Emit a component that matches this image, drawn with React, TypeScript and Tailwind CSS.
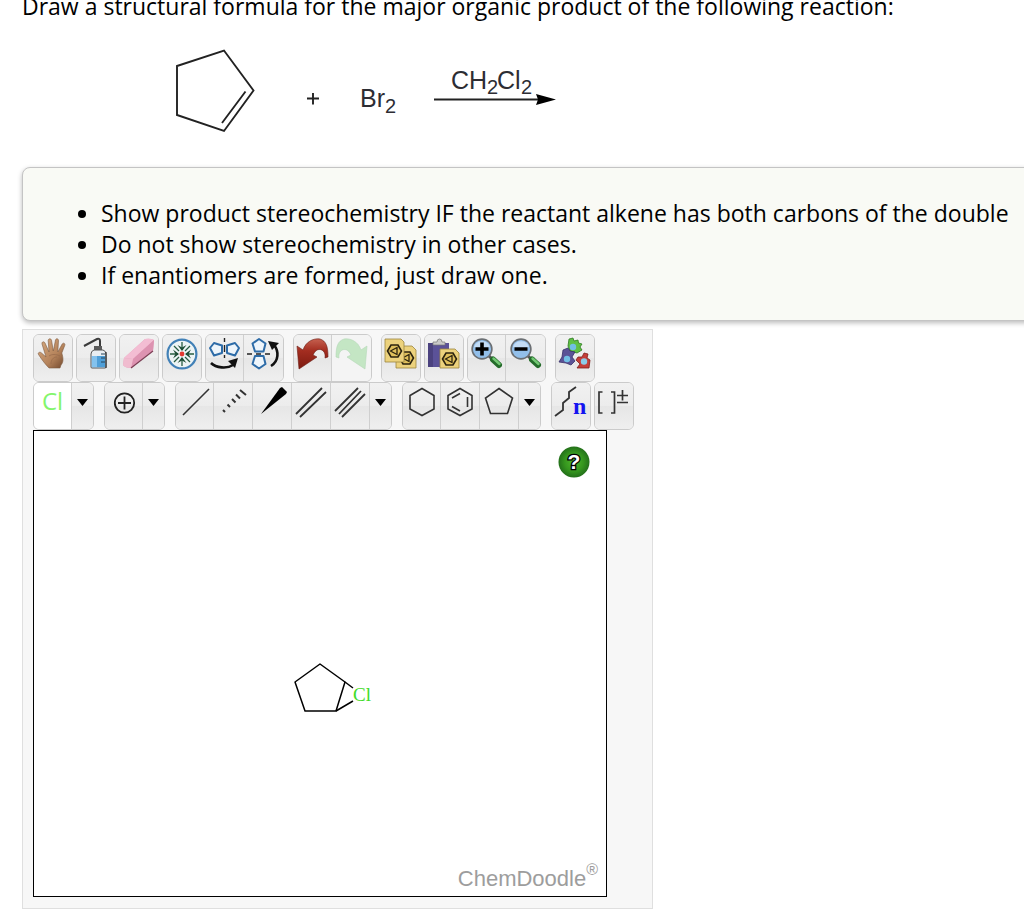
import type { ReactNode } from "react";

const HINTS = [
  "Show product stereochemistry IF the reactant alkene has both carbons of the double",
  "Do not show stereochemistry in other cases.",
  "If enantiomers are formed, just draw one.",
];

const BUTTON_BG =
  "bg-[linear-gradient(#f1f1f1,#ececec_50%,#e6e6e6_50%,#efefef)] hover:brightness-105";

function Icon({ children }: { children: ReactNode }) {
  return (
    <svg viewBox="0 0 32 32" className="h-8 w-8 shrink-0 overflow-visible" aria-hidden="true">
      {children}
    </svg>
  );
}

function Group({ children }: { children: ReactNode }) {
  return (
    <div className="flex h-12 divide-x divide-[#cfcfcf] overflow-hidden rounded-md border border-[#cbcbcb]">
      {children}
    </div>
  );
}

function Tool({
  label,
  children,
  active,
  disabled,
}: {
  label: string;
  children: ReactNode;
  active?: boolean;
  disabled?: boolean;
}) {
  return (
    <button
      type="button"
      title={label}
      aria-label={label}
      aria-pressed={active}
      disabled={disabled}
      className={`flex w-[39px] justify-center pt-[3px] first:w-[38px] ${
        active ? "bg-white" : disabled ? "bg-[#f4f4f4]" : BUTTON_BG
      }`}
    >
      {children}
    </button>
  );
}

function More({ label }: { label: string }) {
  return (
    <button
      type="button"
      aria-label={label}
      className={`flex w-[21px] items-start justify-center pt-4 ${BUTTON_BG}`}
    >
      <svg viewBox="0 0 11 7" className="h-[7px] w-[11px]" aria-hidden="true">
        <path d="M0 0H11L5.5 7Z" fill="#000" />
      </svg>
    </button>
  );
}

function HandIcon() {
  return (
    <Icon>
      <defs>
        <linearGradient id="skin" x1="0" y1="0" x2="1" y2="1">
          <stop offset="0" stopColor="#d6aa81" />
          <stop offset=".6" stopColor="#b5835b" />
          <stop offset="1" stopColor="#6e452b" />
        </linearGradient>
      </defs>
      <path
        d="M12 30C9 27 5 22 1.5 16.5C.5 14.5 3 13.5 4.5 15L9 19L5 6C4.6 3.6 7 3 8 5L12 14L11.2 2.5C11.2.5 14 .2 14.5 2.2L16.3 13L18.5 2C19 0 21.7.5 21.5 2.7L20.8 14L25.2 6C26.5 4.3 28.5 5.4 27.7 7.6L24.8 15C26 19 27 24 24 27L23 30Z"
        fill="url(#skin)"
        stroke="#7d5a40"
        strokeWidth=".6"
      />
      <path d="M12 18C15 16 19 16 23 18M14 26C14 22 16 19 20 19" fill="none" stroke="#95694a" strokeWidth=".7" />
    </Icon>
  );
}

function BottleIcon() {
  return (
    <Icon>
      <path d="M4 8L17 1Q20 0 20 3V10" fill="none" stroke="#3b3b3b" strokeWidth="2" />
      <path d="M14 8H22V13H14Z" fill="#5c5c5c" />
      <path d="M14 12H23Q26 13 26 16V29Q26 30 25 30H12Q11 30 11 29V16Q11 13 14 12Z" fill="#e9eef2" stroke="#555" strokeWidth="1" />
      <path d="M11.8 18H25.2V29.2H11.8Z" fill="#4f9fd8" />
      <path d="M12 18H17V29H12Z" fill="#83c2ee" />
      <path d="M21 16H25M21 20H25M21 24H25" stroke="#26445a" strokeWidth="1" />
      <path d="M26 14V30" stroke="#333" strokeWidth="1.2" />
    </Icon>
  );
}

function EraserIcon() {
  return (
    <Icon>
      <path d="M1 20L22 1Q27 0 31 2L30 13L8 30Q2 30 0 27Z" fill="#e3a1bb" />
      <path d="M1 20L22 1Q27 0 31 2L10 21Z" fill="#f3bdd3" />
      <path d="M10 21L31 2L30 13L8 30Z" fill="#dd93b1" />
      <path d="M1 20L10 21L8 30Q2 30 0 27Z" fill="#f0bccf" />
      <path d="M8 30L30 13" stroke="#7c4056" strokeWidth="1.2" />
    </Icon>
  );
}

function CenterIcon() {
  return (
    <Icon>
      <circle cx="16" cy="16" r="14.4" fill="#edf4f5" stroke="#4281b7" strokeWidth="2.2" />
      <path d="M16 4V12M16 28V20M4 16H12M28 16H20M8 8L13 13M24 24L19 19M24 8L19 13M8 24L13 19" stroke="#275d42" strokeWidth="1.3" />
      <path
        d="M11.5 7L16 13L20.5 7L16 9.5ZM11.5 25L16 19L20.5 25L16 22.5ZM7 11.5L13 16L7 20.5L9.5 16ZM25 11.5L19 16L25 20.5L22.5 16Z"
        fill="#1c4d34"
      />
      <circle cx="16" cy="16" r="2.4" fill="#e33a32" />
    </Icon>
  );
}

function FlipHorizontalIcon() {
  return (
    <Icon>
      <g fill="#eef5fb" stroke="#2e6ca8" strokeWidth="2" strokeLinejoin="round">
        <path d="M1 10L5 5L13 7.5V15L5 17.5Z" />
        <path d="M30 10L26 5L18 7.5V15L26 17.5Z" />
      </g>
      <path d="M15.5 0V4M15.5 7V14M15.5 17V20" stroke="#222" strokeWidth="1.4" />
      <path d="M2 25C7 30 18 31 24 27" fill="none" stroke="#111" strokeWidth="2.6" />
      <path d="M19 23L29 20L26 30Z" fill="#111" />
    </Icon>
  );
}

function FlipVerticalIcon() {
  return (
    <Icon>
      <g fill="#eef5fb" stroke="#2e6ca8" strokeWidth="2" strokeLinejoin="round">
        <path d="M11 1L17.5 5.5L15.5 13.5H7L4.5 5.5Z" />
        <path d="M11 30.5L17.5 26L15.5 18H7L4.5 26Z" />
      </g>
      <path d="M-1 16H4M8 16H13M17 16H22" stroke="#222" strokeWidth="1.4" />
      <path d="M23 28C31 23 31 13 26 7" fill="none" stroke="#111" strokeWidth="2.6" />
      <path d="M20 3L31 5L24 12Z" fill="#111" />
    </Icon>
  );
}

function UndoIcon() {
  return (
    <Icon>
      <defs>
        <linearGradient id="undo" x1="0" y1="0" x2="0" y2="1">
          <stop offset="0" stopColor="#c5604f" />
          <stop offset=".4" stopColor="#a32d20" />
          <stop offset="1" stopColor="#7d1a10" />
        </linearGradient>
      </defs>
      <path
        d="M0 8L6 12C9 3 17 0 23 1C29 3 31 8 31 19L28 20C29 14 25 10 20 12Q17 14 16 17L20 19L2 31Z"
        fill="url(#undo)"
        stroke="#6b1c14"
        strokeWidth=".6"
      />
    </Icon>
  );
}

function RedoIcon() {
  return (
    <Icon>
      <path
        d="M31 8L25 12C22 3 14 0 8 1C2 3 0 8 0 19L3 20C2 14 6 10 11 12Q14 14 15 17L11 19L29 31Z"
        fill="#c4e6c4"
        stroke="#b5d8b8"
        strokeWidth=".6"
      />
    </Icon>
  );
}

function Sheet({ d, cx, cy }: { d: string; cx: number; cy: number }) {
  return (
    <>
      <path d={d} fill="#ecd27d" stroke="#9c8540" strokeWidth=".8" />
      <g transform={`translate(${cx} ${cy})`} fill="none" stroke="#2c240f" strokeWidth="1.6">
        <path d="M-7 0L-3.5 -6H3.5L7 0L3.5 6H-3.5Z" fill="#e0c05c" />
        <path d="M-4 0L2.5 -3.5V3.5Z" strokeWidth="1.3" />
      </g>
    </>
  );
}

function CopyIcon() {
  return (
    <Icon>
      <Sheet d="M11 8H27L31 12V30H11Z" cx={21.5} cy={20} />
      <Sheet d="M0 1H16L19 4V24H0Z" cx={9.5} cy={13} />
    </Icon>
  );
}

function PasteIcon() {
  return (
    <Icon>
      <path d="M0 5H21V29H0Z" fill="#5b5298" />
      <path d="M0 5H5V29H0Z" fill="#4b427f" />
      <path d="M5 7V4H9Q9 1 11.5 1T14 4H17V7Z" fill="#c9c9c9" stroke="#777" strokeWidth=".7" />
      <Sheet d="M12 11H27L31 15V30H12Z" cx={21.5} cy={21} />
    </Icon>
  );
}

function MagnifierIcon({ plus }: { plus?: boolean }) {
  return (
    <Icon>
      <path d="M18 18L22 22" stroke="#555" strokeWidth="3" />
      <path d="M22 21.5L28 27" stroke="#246b2a" strokeWidth="6" strokeLinecap="round" />
      <path d="M22.5 20.5L28.5 26" stroke="#72c873" strokeWidth="2.4" strokeLinecap="round" />
      <circle cx="11" cy="11" r="9.9" fill="#92bfea" stroke="#6b6f73" strokeWidth="1.6" />
      <path d="M3 9A8.4 8.4 0 0 1 19 9Q11 12 3 9Z" fill="#c3dcf5" />
      <path d={plus ? "M4.5 11H17.5M11 4.5V17.5" : "M4.5 11H17.5"} stroke="#000" strokeWidth="3.6" />
    </Icon>
  );
}

function PuzzleIcon() {
  return (
    <Icon>
      <path d="M10 1L14 0L15 3L19 2L19.5 5L23 6L21 9L23 12L18 15L11 13L9 8Z" fill="#5fc043" stroke="#2d7a22" strokeWidth=".8" />
      <path d="M4 12L9 10L11 13L16 14L13 19L16 23L12 27L7 25L0 24L3 19Z" fill="#5b5396" stroke="#37306a" strokeWidth=".8" />
      <path d="M19 19L23 19L25 15L29 16L28 20L31 22L30 30H18L21 26L17 22Z" fill="#c43e38" stroke="#7f1e1c" strokeWidth=".8" />
      <circle cx="14" cy="9" r="3.2" fill="#72bfe4" />
      <circle cx="8" cy="21" r="3.2" fill="#72bfe4" />
      <circle cx="25" cy="23.5" r="3.2" fill="#8ccbe8" />
    </Icon>
  );
}

function LineIcon({ d, width = 1.6 }: { d: string; width?: number }) {
  return (
    <Icon>
      <path d={d} fill="none" stroke="#333" strokeWidth={width} />
    </Icon>
  );
}

function Toolbar() {
  return (
    <div role="toolbar" aria-label="Sketcher tools">
      <div className="flex gap-[9px]">
        <div className="flex gap-[3px]">
          <Group><Tool label="Move"><HandIcon /></Tool></Group>
          <Group><Tool label="Clear"><BottleIcon /></Tool></Group>
          <Group><Tool label="Erase"><EraserIcon /></Tool></Group>
          <Group><Tool label="Center"><CenterIcon /></Tool></Group>
          <Group>
            <Tool label="Flip horizontally"><FlipHorizontalIcon /></Tool>
            <Tool label="Flip vertically"><FlipVerticalIcon /></Tool>
          </Group>
        </div>
        <Group>
          <Tool label="Undo"><UndoIcon /></Tool>
          <Tool label="Redo" disabled><RedoIcon /></Tool>
        </Group>
        <div className="flex gap-[3px]">
          <Group><Tool label="Copy"><CopyIcon /></Tool></Group>
          <Group><Tool label="Paste"><PasteIcon /></Tool></Group>
          <Group>
            <Tool label="Zoom in"><MagnifierIcon plus /></Tool>
            <Tool label="Zoom out"><MagnifierIcon /></Tool>
          </Group>
        </div>
        <Group><Tool label="Templates"><PuzzleIcon /></Tool></Group>
      </div>

      <div className="flex gap-[10px]">
        <Group>
          <Tool label="Chlorine" active>
            <span className="text-[24px] leading-[30px] text-[#84f56c]">Cl</span>
          </Tool>
          <More label="More elements" />
        </Group>
        <Group>
          <Tool label="Increase charge">
            <Icon>
              <circle cx="16.5" cy="17" r="9.7" fill="none" stroke="#222" strokeWidth="1.8" />
              <path d="M10 17H23M16.5 10.5V23.5" stroke="#222" strokeWidth="1.8" />
            </Icon>
          </Tool>
          <More label="More attributes" />
        </Group>
        <Group>
          <Tool label="Single bond"><LineIcon d="M4 29L30 3" /></Tool>
          <Tool label="Recessed bond">
            <LineIcon d="M6 24L8 26M10.5 18.5L13 21M15 13L18.5 16.5M19 8.5L23 12.5M23 4L29 9" width={2} />
          </Tool>
          <Tool label="Protruding bond">
            <Icon><path d="M5 28L24 2L26 1L31 6L30 8Z" fill="#000" /></Icon>
          </Tool>
          <Tool label="Double bond"><LineIcon d="M1 28L27 2M5 31L31 6" width={1.8} /></Tool>
          <Tool label="Triple bond"><LineIcon d="M1 25L24 2M5 28L27 5M8 31L31 8" width={1.8} /></Tool>
          <More label="More bonds" />
        </Group>
        <Group>
          <Tool label="Cyclohexane ring"><LineIcon d="M16 2.5L28 9.5V23L16 29.5L4 23V9.5Z" /></Tool>
          <Tool label="Benzene ring">
            <LineIcon d="M16 2.5L28 9.5V23L16 29.5L4 23V9.5ZM8 12L16 7.5M23.5 11V21M8 20.5L16 25" />
          </Tool>
          <Tool label="Cyclopentane ring"><LineIcon d="M16 2.5L29.5 12L24.5 27.5H7.5L2.5 12Z" /></Tool>
          <More label="More rings" />
        </Group>
        <div className="flex gap-[3px]">
          <Group>
            <Tool label="Chain">
              <Icon>
                <path d="M21 1L14 6V12L8 17V24L0 30" fill="none" stroke="#333" strokeWidth="1.8" />
                <text x="18" y="28" fontSize="24" fontWeight="700" fill="#1414f0" fontFamily="'Liberation Serif', serif">n</text>
              </Icon>
            </Tool>
          </Group>
          <Group>
            <Tool label="Repeat unit or charge">
              <LineIcon d="M4.5 6H1V27H4.5M13 6H16.5V27H13M19 9.5H30M24.5 4V14.5M19 16.5H30" width={1.7} />
            </Tool>
          </Group>
        </div>
      </div>
    </div>
  );
}

function Reaction() {
  return (
    <svg
      viewBox="170 44 390 92"
      className="ml-[148px] h-[92px] w-[390px]"
      role="img"
      aria-label="Cyclopentene plus bromine in dichloromethane"
      fontFamily="'Liberation Sans', Arial, sans-serif"
      fontSize="25"
      fill="#2d2d33"
    >
      <path d="M177 66L224 50.5L253.5 90.5L224 131L177 115ZM245.5 91.5L222 123" fill="none" stroke="#222" strokeWidth="1.9" />
      <path d="M307 98.5H319M313 93V104.5" stroke="#222" strokeWidth="1.9" />
      <text x="360" y="107">Br</text>
      <text x="385" y="113" fontSize="20">2</text>
      <text x="451" y="89">CH</text>
      <text x="487" y="94" fontSize="20">2</text>
      <text x="497" y="89">Cl</text>
      <text x="521" y="94" fontSize="20">2</text>
      <path d="M434 99.5H540" stroke="#222" strokeWidth="1.8" />
      <path d="M536 94L556 99.5L536 105L538 99.5Z" fill="#000" />
    </svg>
  );
}

function Canvas() {
  return (
    <div className="relative max-w-[574px] border border-black bg-white">
      <svg viewBox="0 0 572 465" className="block h-auto w-full" role="img" aria-label="Drawn structure">
        <g fill="none" stroke="#000" strokeWidth="1.5" strokeLinejoin="round">
          <path d="M286 233L311 251L302 280H271L261 251Z" />
          <path d="M311 251L319 257M302 280L319 270" />
        </g>
        <text x="319" y="270" fontSize="19" fill="#3fdc28" fontFamily="'Liberation Serif', serif">
          Cl
        </text>
      </svg>
      <button type="button" aria-label="Help" className="absolute top-[15px] right-4 h-8 w-8">
        <svg viewBox="0 0 32 32" className="h-8 w-8" aria-hidden="true">
          <defs>
            <radialGradient id="help">
              <stop offset="0" stopColor="#4fb62c" />
              <stop offset=".6" stopColor="#35961e" />
              <stop offset="1" stopColor="#23701a" />
            </radialGradient>
          </defs>
          <circle cx="16" cy="16" r="15.5" fill="url(#help)" />
          <text
            x="16"
            y="23"
            textAnchor="middle"
            fontSize="21"
            fontWeight="700"
            fontFamily="'Liberation Sans', Arial, sans-serif"
            fill="#fff"
            stroke="#000"
            strokeWidth="2.6"
            paintOrder="stroke"
          >
            ?
          </text>
        </svg>
      </button>
      <p className="absolute right-2 bottom-0 flex items-start font-['Liberation_Sans',Arial,sans-serif] text-[22px] leading-[34px] text-[#9d9d9d]">
        ChemDoodle<sup className="top-0 text-[16px] leading-4">®</sup>
      </p>
    </div>
  );
}

export default function App() {
  return (
    <main className="overflow-hidden bg-white pb-[3px] pl-[22px] font-['Open_Sans','Noto_Sans',sans-serif] text-[23px] leading-[31px] text-black">
      <p className="-mt-[9px] whitespace-nowrap">
        Draw a structural formula for the major organic product of the following reaction:
      </p>
      <div className="pt-[22px] pb-[31px]">
        <Reaction />
      </div>

      <div className="-mr-4 rounded-lg border border-[#c4c4c4] bg-[#f9faf5] pt-[30px] pb-[29px] shadow-[0_2px_5px_#bbb]">
        <ul className="list-disc pl-[78px] whitespace-nowrap">
          {HINTS.map((hint) => (
            <li key={hint}>{hint}</li>
          ))}
        </ul>
      </div>

      <section
        aria-label="Structure editor"
        className="mt-2 max-w-[631px] border border-[#dfdfdf] bg-[#f7f7f7] px-[10px] pt-1 pb-[11px]"
      >
        <Toolbar />
        <Canvas />
      </section>
    </main>
  );
}
